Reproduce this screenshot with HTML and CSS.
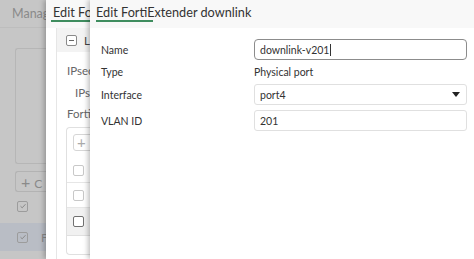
FILE: index.html
```html
<!DOCTYPE html>
<html lang="en">
<head>
    <meta charset="UTF-8">
    <title>Edit FortiExtender downlink</title>
    <link rel="stylesheet" href="styles.css">
</head>
<body>

    <!-- page behind the slide-outs, dimmed -->
    <div class="page">
        <div class="page-head">Manag</div>
        <div class="page-body">
            <div class="page-box"></div>
            <div class="page-btn"><span class="plus">+</span> C</div>
            <div class="page-row">
                <span class="cb checked">
                    <svg width="8" height="8" viewBox="0 0 8 8"><path d="M1.5 4.2 L3.2 5.8 L6.5 2.2" fill="none" stroke="#8a8a8a" stroke-width="1"/></svg>
                </span>
            </div>
            <div class="page-row selected">
                <span class="cb checked">
                    <svg width="8" height="8" viewBox="0 0 8 8"><path d="M1.5 4.2 L3.2 5.8 L6.5 2.2" fill="none" stroke="#8a8a8a" stroke-width="1"/></svg>
                </span>
                <span class="page-cell">F</span>
            </div>
        </div>
    </div>

    <!-- first slide-out, mostly hidden behind the second -->
    <div class="panel panel-mid">
        <div class="panel-head">
            <div class="panel-title">Edit Fort</div>
            <div class="tab-line"></div>
        </div>
        <div class="mid-body">
            <div class="section">
                <div class="section-head">
                    <span class="cb minus"></span>
                    <span>L</span>
                </div>
                <div class="mid-field">IPsec</div>
                <div class="mid-field sub">IPs</div>
                <div class="mid-field">Forti</div>
                <div class="mid-table">
                    <div class="mid-tools"><span class="tool-btn">+</span></div>
                    <div class="mid-row"><span class="cb"></span></div>
                    <div class="mid-row"><span class="cb"></span></div>
                    <div class="mid-row active"><span class="cb dark"></span></div>
                    <div class="mid-row last"></div>
                </div>
            </div>
        </div>
    </div>

    <!-- front slide-out -->
    <div class="panel panel-front">
        <div class="panel-head">
            <div class="panel-title">Edit FortiExtender downlink</div>
            <div class="tab-line"></div>
        </div>
        <div class="form">
            <div class="form-row">
                <label class="form-label">Name</label>
                <div class="field focused">downlink-v201<span class="caret"></span></div>
            </div>
            <div class="form-row short">
                <label class="form-label">Type</label>
                <div class="field plain">Physical port</div>
            </div>
            <div class="form-row">
                <label class="form-label">Interface</label>
                <div class="field select">
                    <span>port4</span>
                    <svg width="8" height="5" viewBox="0 0 8 5"><path d="M0 0 H8 L4 5 Z" fill="#222"/></svg>
                </div>
            </div>
            <div class="form-row">
                <label class="form-label">VLAN ID</label>
                <div class="field">201</div>
            </div>
        </div>
    </div>

</body>
</html>
```

FILE: styles.css
```css
body {
    margin: 0;
    width: 474px;
    height: 259px;
    overflow: hidden;
    position: relative;
    font-family: Lato, 'Open Sans', sans-serif;
    font-size: 10.5px;
    color: #333;
    background: #c6c6c6;
}

/* Dimmed page */
.page {
    width: 46px;
    height: 100%;
    overflow: hidden;
    background: #c6c6c6;
    color: #8a8a8a;
}

.page-head {
    height: 28px;
    line-height: 27px;
    padding-left: 12px;
    font-size: 12.5px;
    white-space: nowrap;
    border-bottom: 1px solid #bdbdbd;
    box-sizing: border-box;
}

.page-body {
    padding-left: 15px;
}

.page-box {
    margin-top: 20px;
    height: 114px;
    border: 1px solid #b6b6b6;
    border-right: none;
    border-radius: 3px 0 0 3px;
}

.page-btn {
    margin-top: 7px;
    height: 21px;
    line-height: 20px;
    border: 1px solid #b3b3b3;
    border-right: none;
    border-radius: 3px 0 0 3px;
    padding-left: 5px;
    white-space: nowrap;
    box-sizing: border-box;
    font-size: 12px;
}

.page-btn .plus {
    font-size: 16px;
    margin-right: 1px;
}

.page-row {
    height: 28px;
    display: flex;
    align-items: center;
    margin-left: -15px;
    padding-left: 17px;
    white-space: nowrap;
}

.page-row:first-of-type {
    margin-top: 4px;
}

.page-row.selected {
    background: #b9bdc5;
    margin-top: 3px;
}

.page-cell {
    margin-left: 13px;
    font-size: 12px;
}

/* Checkboxes */
.cb {
    width: 9px;
    height: 9px;
    border: 1px solid #c8c8c8;
    border-radius: 2px;
    display: inline-flex;
    align-items: center;
    justify-content: center;
    flex-shrink: 0;
    background: #fff;
}

.cb.checked {
    border-color: #9c9c9c;
    background: transparent;
}

.cb.dark {
    border-color: #707070;
}

.cb.minus {
    border-color: #8a8a8a;
}

.cb.minus::after {
    content: '';
    width: 5px;
    height: 1px;
    background: #666;
}

/* Slide-out panels */
.panel {
    position: absolute;
    top: 0;
    bottom: 0;
    background: #fff;
    box-shadow: -2px 0 5px rgba(0, 0, 0, 0.25);
    overflow: hidden;
}

.panel-mid {
    left: 46px;
    width: 44px;
}

.panel-front {
    left: 90px;
    right: 0;
}

.panel-head {
    height: 28px;
    background: #f8f8f8;
    padding: 5px 0 0 6px;
    box-sizing: border-box;
}

.panel-mid .panel-head {
    padding-left: 5px;
}

.panel-title {
    font-size: 12.7px;
    color: #333;
    line-height: 15px;
    white-space: nowrap;
}

.panel-mid .panel-title {
    padding-left: 2px;
}

.tab-line {
    width: 57px;
    height: 2px;
    background: #3f8d5f;
}

/* Middle panel content */
.mid-body {
    padding-left: 10px;
    height: calc(100% - 28px);
}

.section {
    border-left: 1px solid #e6e6e6;
    height: 100%;
    color: #666;
}

.section-head {
    height: 24px;
    background: #f3f3f3;
    display: flex;
    align-items: center;
    gap: 7px;
    padding-left: 9px;
    white-space: nowrap;
    color: #444;
    font-size: 11.5px;
}

.mid-field {
    padding-left: 10px;
    height: 21px;
    line-height: 21px;
    white-space: nowrap;
    font-size: 11.5px;
}

.section-head + .mid-field {
    margin-top: 8px;
}

.mid-field.sub {
    padding-left: 18px;
    margin-top: 1px;
}

.mid-table {
    margin: 3px 0 0 9px;
    border: 1px solid #e0e0e0;
    border-right: none;
    border-radius: 4px 0 0 4px;
    height: 126px;
    overflow: hidden;
}

.mid-tools {
    height: 30px;
    padding: 6px 0 0 6px;
    box-sizing: border-box;
}

.tool-btn {
    display: inline-block;
    width: 40px;
    height: 17px;
    line-height: 15px;
    border: 1px solid #d6d6d6;
    border-radius: 3px;
    padding-left: 3px;
    font-size: 15px;
    color: #aaa;
    box-sizing: border-box;
}

.mid-row {
    height: 25px;
    display: flex;
    align-items: center;
    padding-left: 6px;
    border-bottom: 1px solid #e6e6e6;
    box-sizing: border-box;
}

.mid-row.active {
    background: #f1f1f1;
    height: 28px;
    border-bottom-color: #e0e0e0;
}

.mid-row.last {
    border-bottom: none;
}

/* Front form */
.form {
    padding: 11px 7px 0 11px;
}

.form-row {
    display: flex;
    align-items: center;
    height: 21px;
    margin-bottom: 2px;
}

.form-row.short {
    height: 19px;
    margin-bottom: 3px;
}

.form-row:nth-child(3) {
    margin-bottom: 5px;
}

.form-label {
    width: 153px;
    flex-shrink: 0;
    color: #333;
    white-space: nowrap;
}

.field {
    flex: 1;
    height: 21px;
    box-sizing: border-box;
    border: 1px solid #e0e0e0;
    border-radius: 3px;
    padding-left: 5px;
    display: flex;
    align-items: center;
    color: #333;
    white-space: nowrap;
}

.field.focused {
    border-color: #8c8c8c;
    border-radius: 4px;
}

.caret {
    display: inline-block;
    width: 1px;
    height: 12px;
    background: #333;
    margin-left: 1px;
}

.field.plain {
    border: none;
    padding-left: 0;
}

.field.select {
    justify-content: space-between;
    padding-right: 6px;
}
```
